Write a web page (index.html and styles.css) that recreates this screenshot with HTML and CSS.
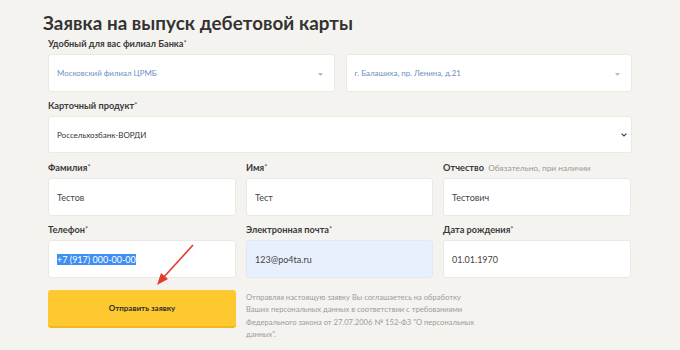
FILE: index.html
```html
<!DOCTYPE html>
<html lang="ru">
<head>
<meta charset="utf-8">
<link rel="stylesheet" href="styles.css">
</head>
<body>
<div class="page">
  <h1 class="title">Заявка на выпуск дебетовой карты</h1>
  <form class="form">
    <div class="row">
      <div class="label">Удобный для вас филиал Банка<span class="req">*</span></div>
      <div class="grid2">
        <div class="box select"><span class="sel-text">Московский филиал ЦРМБ</span>
          <svg class="tri" width="5" height="3" viewBox="0 0 5 3"><path d="M0 0 H5 L2.5 3 Z" fill="#b8b8b8"/></svg>
        </div>
        <div class="box select"><span class="sel-text">г. Балашиха, пр. Ленина, д.21</span>
          <svg class="tri" width="5" height="3" viewBox="0 0 5 3"><path d="M0 0 H5 L2.5 3 Z" fill="#b8b8b8"/></svg>
        </div>
      </div>
    </div>
    <div class="row row-product">
      <div class="label">Карточный продукт<span class="req">*</span></div>
      <div class="box product"><span class="prod-text">Россельхозбанк-ВОРДИ</span>
        <svg class="chev" width="6" height="4" viewBox="0 0 6 4"><path d="M0.6 0.6 L3 3 L5.4 0.6" fill="none" stroke="#444" stroke-width="1.2"/></svg>
      </div>
    </div>
    <div class="grid3 row">
      <div class="field">
        <div class="label">Фамилия<span class="req">*</span></div>
        <div class="box input">Тестов</div>
      </div>
      <div class="field">
        <div class="label">Имя<span class="req">*</span></div>
        <div class="box input">Тест</div>
      </div>
      <div class="field">
        <div class="label">Отчество <span class="hint">Обязательно, при наличии</span></div>
        <div class="box input">Тестович</div>
      </div>
    </div>
    <div class="grid3 row">
      <div class="field">
        <div class="label">Телефон<span class="req">*</span></div>
        <div class="box input"><span class="selected">+7 (917) 000-00-00</span></div>
      </div>
      <div class="field">
        <div class="label">Электронная почта<span class="req">*</span></div>
        <div class="box input autofill">123@po4ta.ru</div>
      </div>
      <div class="field">
        <div class="label">Дата рождения<span class="req">*</span></div>
        <div class="box input">01.01.1970</div>
      </div>
    </div>
    <div class="grid3 submit-row">
      <button type="button" class="btn">Отправить заявку</button>
      <p class="agree">Отправляя настоящую заявку Вы соглашаетесь на обработку<br>Ваших персональных данных в соответствии с требованиями<br>Федерального закона от 27.07.2006 № 152-ФЗ "О персональных<br>данных".</p>
    </div>
  </form>
  <svg class="arrow" width="60" height="60" viewBox="0 0 60 60">
    <line x1="52" y1="5" x2="22" y2="38" stroke="#e23b2e" stroke-width="1.6"/>
    <path d="M16 45 L20 33 L27 39 Z" fill="#e23b2e"/>
  </svg>
</div>
</body>
</html>
```

FILE: styles.css
```css
html, body {
  margin: 0;
  padding: 0;
  background: #f5f3ef;
}
body {
  font-family: "Lato", "Open Sans", sans-serif;
  color: #333;
  width: 680px;
  height: 350px;
  overflow: hidden;
}
.page {
  position: relative;
  padding: 10px 0 0 48px;
}
.title {
  margin: 0 0 2px -5px;
  font-size: 18.8px;
  line-height: 26px;
  font-weight: 700;
  color: #333;
  letter-spacing: 0.05px;
}
.form {
  width: 584px;
  display: flex;
  flex-direction: column;
}
.row {
  margin-bottom: 8px;
}
.row-product {
  margin-bottom: 9px;
}
.label {
  font-size: 9.2px;
  line-height: 12px;
  font-weight: 700;
  color: #3a3a3a;
  margin-bottom: 4px;
  white-space: nowrap;
}
.req {
  font-weight: 400;
  color: #555;
  font-size: 7.5px;
  vertical-align: top;
}
.hint {
  font-weight: 400;
  font-size: 8.3px;
  color: #999;
  margin-left: 2px;
}
.grid2 {
  display: grid;
  grid-template-columns: 1fr 1fr;
  gap: 11px;
}
.grid3 {
  display: grid;
  grid-template-columns: 188px 187px 188px;
  column-gap: 10px;
}
.box {
  background: #fff;
  border: 1px solid #ece9e3;
  border-radius: 3px;
  box-sizing: border-box;
  height: 38px;
  display: flex;
  align-items: center;
}
.select {
  padding: 0 11px 0 8px;
  justify-content: space-between;
}
.sel-text {
  font-size: 7.9px;
  color: #6d8fc4;
}
.tri {
  display: block;
  margin-top: 3px;
}
.product {
  height: 37px;
  padding: 0 4px 0 8px;
  justify-content: space-between;
}
.prod-text {
  font-size: 8px;
  color: #333;
}
.chev {
  display: block;
}
.input {
  padding: 0 8px;
  font-size: 9px;
  color: #444;
}
.autofill {
  background: #e8f0fe;
  border-color: #e1e8f4;
}
.selected {
  background: #3f8ef2;
  color: #fff;
}
.submit-row {
  margin-top: 4px;
  align-items: start;
}
.btn {
  height: 38px;
  border: none;
  border-bottom: 2px solid #f2b71e;
  border-radius: 3px;
  background: #fdc92e;
  font-family: inherit;
  font-size: 8px;
  font-weight: 700;
  color: #2d2d2d;
  cursor: pointer;
}
.agree {
  grid-column: 2 / 4;
  margin: 1px 0 0;
  font-size: 7.6px;
  line-height: 12.3px;
  color: #9b9b9b;
  white-space: nowrap;
}
.arrow {
  position: absolute;
  left: 141px;
  top: 240px;
}
```
